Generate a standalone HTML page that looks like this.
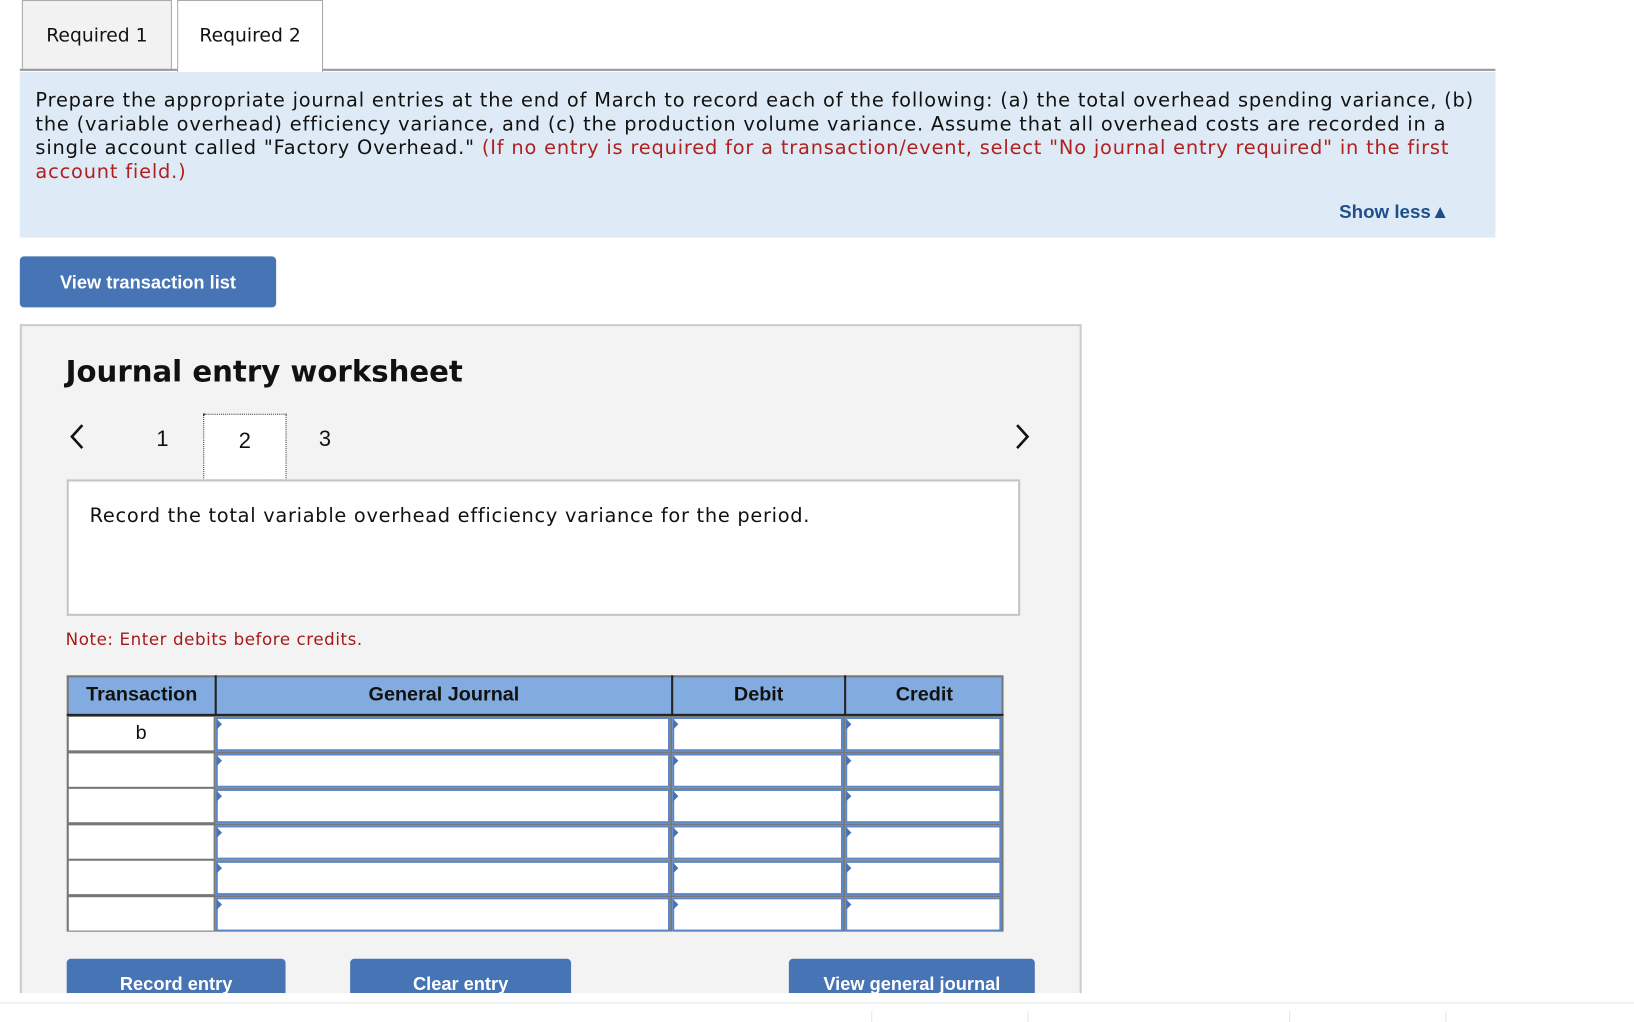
<!DOCTYPE html>
<html><head><meta charset="utf-8"><style>
html,body{margin:0;padding:0;background:#fff;overflow:hidden;width:1634px;height:1022px}
#w{position:absolute;left:0;top:0;width:1568px;height:981px;transform:scale(1.0421);transform-origin:0 0;font-family:"DejaVu Sans",Verdana,sans-serif;color:#111}
.a{position:absolute}
.tab{position:absolute;top:0;height:67px;box-sizing:border-box;font-size:18px;line-height:67px;text-align:center;border:1px solid #aaa;border-bottom:none}
.btn{position:absolute;background:#4674b4;color:#fff;font-family:"Liberation Sans",Arial,sans-serif;font-weight:bold;font-size:17.5px;text-align:center;border-radius:4px 4px 0 0}
.th{position:absolute;top:0;height:38px;line-height:38px;text-align:center;font-family:"Liberation Sans",Arial,sans-serif;font-weight:bold;font-size:19px;border-right:2px solid #222;box-sizing:border-box}
.cell{position:absolute;background:#fff;border:2px solid #5b87c6;box-sizing:border-box}
.cell:before{content:"";position:absolute;left:-1px;top:0;border-left:5px solid #4674b4;border-top:5px solid transparent;border-bottom:5px solid transparent}
</style></head><body><div id="w">
<div class="tab" style="left:21px;width:144px;background:#f2f2f2">Required 1</div>
<div class="tab" style="left:170px;width:140px;background:#fff;height:69px;z-index:2">Required 2</div>
<div class="a" style="left:19px;top:66px;width:1416px;height:2px;background:#999"></div>
<div class="a" style="left:19px;top:69px;width:1416px;height:159px;background:#deebf7"></div>
<div class="a" style="left:34px;top:85px;width:1400px;font-size:18.6px;line-height:23px;color:#111;letter-spacing:0.78px;white-space:nowrap">Prepare the appropriate journal entries at the end of March to record each of the following: (a) the total overhead spending variance, (b)<br>the (variable overhead) efficiency variance, and (c) the production volume variance. Assume that all overhead costs are recorded in a<br>single account called "Factory Overhead." <span style="color:#b0201e">(If no entry is required for a transaction/event, select "No journal entry required" in the first</span><br><span style="color:#b0201e">account field.)</span></div>
<div class="a" style="left:1285px;top:193px;font-family:'Liberation Sans',Arial,sans-serif;font-weight:bold;font-size:18px;color:#1f4e8c">Show less▲</div>
<div class="btn" style="left:19px;top:246px;width:246px;height:49px;line-height:51px;border-radius:4px">View transaction list</div>
<div class="a" style="left:19px;top:311px;width:1019px;height:660px;background:#f3f3f3;border:2px solid #ccc;box-sizing:border-box"></div>
<div class="a" style="left:63px;top:340px;font-size:28px;font-weight:bold;font-family:'DejaVu Sans',Verdana,sans-serif">Journal entry worksheet</div>
<svg class="a" style="left:66px;top:406px" width="16" height="26"><path d="M13 2 L3 13 L13 24" stroke="#111" stroke-width="2.5" fill="none"/></svg>
<div class="a" style="left:150px;top:410px;font-family:'Liberation Sans',Arial,sans-serif;font-size:21px">1</div>
<div class="a" style="left:195px;top:397px;width:80px;height:64px;background:#fff;border:1.5px dotted #333;box-sizing:border-box;text-align:center;line-height:52px;font-family:'Liberation Sans',Arial,sans-serif;font-size:21px">2</div>
<div class="a" style="left:306px;top:410px;font-family:'Liberation Sans',Arial,sans-serif;font-size:21px">3</div>
<svg class="a" style="left:973px;top:406px" width="16" height="26"><path d="M3 2 L13 13 L3 24" stroke="#111" stroke-width="2.5" fill="none"/></svg>
<div class="a" style="left:64px;top:460px;width:915px;height:131px;background:#fff;border:2px solid #c4c4c4;box-sizing:border-box"></div>
<div class="a" style="left:86px;top:485px;font-size:18.6px;letter-spacing:0.68px">Record the total variable overhead efficiency variance for the period.</div>
<div class="a" style="left:63px;top:604px;font-size:16px;color:#a5191a;letter-spacing:0.55px">Note: Enter debits before credits.</div>
<div class="a" style="left:64px;top:648px;width:899px;height:246px;background:#777">
 <div class="a" style="left:2px;top:2px;width:895px;height:36px;background:#82acdf"></div>
 <div class="th" style="left:2px;width:142px;">Transaction</div>
 <div class="th" style="left:144px;width:438px;">General Journal</div>
 <div class="th" style="left:582px;width:166px;">Debit</div>
 <div class="th" style="left:748px;width:150px;border-right:none">Credit</div>
 <div class="a" style="left:0;top:37px;width:899px;height:2px;background:#222"></div>
</div>
<div id="rows"></div>
<div class="btn" style="left:64px;top:920px;width:210px;height:33px;line-height:48px">Record entry</div>
<div class="btn" style="left:336px;top:920px;width:212px;height:33px;line-height:48px">Clear entry</div>
<div class="btn" style="left:757px;top:920px;width:236px;height:33px;line-height:48px">View general journal</div>
<div class="a" style="left:0;top:953px;width:1568px;height:28px;background:#fff"></div>
<div class="a" style="left:0;top:962px;width:1568px;height:1px;background:#e6e6e6"></div>
<div class="a" style="left:836px;top:970px;width:1px;height:11px;background:#e6e6e6"></div>
<div class="a" style="left:986px;top:970px;width:1px;height:11px;background:#e6e6e6"></div>
<div class="a" style="left:1237px;top:970px;width:1px;height:11px;background:#e6e6e6"></div>
<div class="a" style="left:1387px;top:970px;width:1px;height:11px;background:#e6e6e6"></div>
</div>
<script>
var h='';for(var i=0;i<6;i++){var t=688+i*34.5;
h+='<div class="a" style="left:66px;top:'+t+'px;width:139px;height:32px;background:#fff;text-align:center;line-height:32px;font-family:Liberation Sans,Arial,sans-serif;font-size:19px">'+(i==0?'b':'')+'</div>';
h+='<div class="cell" style="left:207px;top:'+t+'px;width:436px;height:33px"></div>';
h+='<div class="cell" style="left:645px;top:'+t+'px;width:164px;height:33px"></div>';
h+='<div class="cell" style="left:811px;top:'+t+'px;width:150px;height:33px"></div>';}
document.getElementById('rows').outerHTML=h;
</script>
</body></html>
